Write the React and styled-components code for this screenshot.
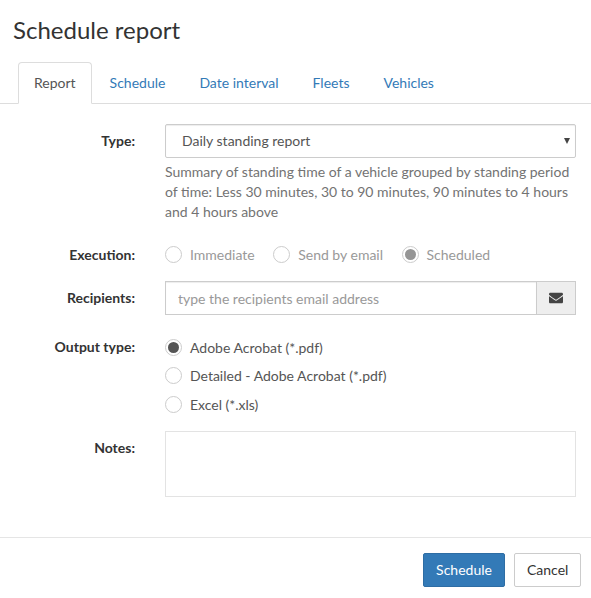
import React from "react";
import styled, { createGlobalStyle } from "styled-components";
import { FaEnvelope } from "react-icons/fa";

const GlobalStyle = createGlobalStyle`
	* { box-sizing: border-box; }
	body {
		margin: 0;
		background: #fff;
		font-family: Lato, "Open Sans", sans-serif;
		font-size: 14px;
		line-height: 20px;
		color: #333;
	}
`;

const Modal = styled.div`
	width: 591px;
	height: 598px;
	display: flex;
	flex-direction: column;
`;

const Title = styled.h4`
	margin: 0;
	padding: 13px 13px 0;
	height: 62px;
	font-size: 24px;
	line-height: 33px;
	font-weight: 400;
	color: #333;
`;

const Tabs = styled.ul`
	display: flex;
	margin: 0;
	padding: 0 0 0 18px;
	height: 42px;
	list-style: none;
	border-bottom: 1px solid #ddd;
`;

const Tab = styled.li`
	height: 42px;
	margin-right: 2px;
	padding: 10px 15px;
	border: 1px solid ${({ $active }) => ($active ? "#ddd" : "transparent")};
	border-bottom-color: ${({ $active }) => ($active ? "#fff" : "transparent")};
	border-radius: 4px 4px 0 0;
	color: ${({ $active }) => ($active ? "#555" : "#337ab7")};
	background: ${({ $active }) => ($active ? "#fff" : "transparent")};
`;

const Form = styled.form`
	flex: 1;
	display: flex;
	flex-direction: column;
	padding: 20px 15px 0 0;
`;

const Row = styled.div`
	display: grid;
	grid-template-columns: 135px 411px;
	column-gap: 30px;
	margin-bottom: ${({ $gap }) => $gap ?? 16}px;
`;

const Label = styled.label`
	text-align: right;
	font-weight: 700;
	padding-top: ${({ $top }) => $top ?? 7}px;
	color: #333;
`;

const SelectWrap = styled.div`
	position: relative;
`;

const Select = styled.select`
	display: block;
	width: 100%;
	height: 34px;
	padding: 6px 16px;
	appearance: none;
	background: #fff;
	border: 1px solid #ccc;
	border-radius: 2px;
	font: inherit;
	color: #555;
	box-shadow: inset 0 1px 1px rgba(0, 0, 0, 0.075);
`;

const Caret = styled.span`
	position: absolute;
	right: 6px;
	top: 14px;
	width: 0;
	height: 0;
	border-left: 3.5px solid transparent;
	border-right: 3.5px solid transparent;
	border-top: 6px solid #444;
	pointer-events: none;
`;

const Help = styled.p`
	margin: 4px 0 0;
	color: #737373;
`;

const RadioInline = styled.div`
	display: flex;
	gap: 18.5px;
	padding-top: 7px;
`;

const RadioStack = styled.div`
	display: flex;
	flex-direction: column;
	gap: 8.5px;
	padding: 6.7px 0 0.3px;
`;

const RadioLabel = styled.span`
	display: flex;
	align-items: center;
	height: 20px;
	gap: 8px;
	color: ${({ $disabled }) => ($disabled ? "#999" : "#555")};
`;

const RadioCircle = styled.span`
	width: 17px;
	height: 17px;
	margin-top: -1px;
	border: 1px solid #ccc;
	border-radius: 50%;
	background: #fff;
	display: flex;
	align-items: center;
	justify-content: center;
	&::after {
		content: "";
		display: ${({ $checked }) => ($checked ? "block" : "none")};
		width: 11px;
		height: 11px;
		border-radius: 50%;
		background: ${({ $disabled }) => ($disabled ? "#959595" : "#555")};
	}
`;

const InputGroup = styled.div`
	display: flex;
`;

const Input = styled.input`
	flex: 1;
	min-width: 0;
	height: 34px;
	padding: 6px 12px;
	background: #fff;
	border: 1px solid #ccc;
	border-right: 0;
	font: inherit;
	color: #555;
	box-shadow: inset 0 1px 1px rgba(0, 0, 0, 0.075);
	&::placeholder {
		color: #999;
		opacity: 1;
	}
`;

const Addon = styled.span`
	width: 40px;
	height: 34px;
	display: flex;
	align-items: center;
	justify-content: center;
	background: #eee;
	border: 1px solid #ccc;
	color: #444;
`;

const Textarea = styled.textarea`
	display: block;
	width: 100%;
	height: 66px;
	padding: 6px 12px;
	background: #fff;
	border: 1px solid #e3e3e3;
	font: inherit;
	resize: none;
`;

const Footer = styled.div`
	display: flex;
	justify-content: flex-end;
	gap: 9px;
	height: 61px;
	padding: 15px 10px 0 0;
	border-top: 1px solid #e5e5e5;
`;

const Button = styled.button`
	height: 34px;
	padding: 6px 12px;
	width: ${({ $width }) => $width}px;
	font: inherit;
	border-radius: 2px;
	border: 1px solid ${({ $primary }) => ($primary ? "#2e6da4" : "#ccc")};
	background: ${({ $primary }) => ($primary ? "#337ab7" : "#fff")};
	color: ${({ $primary }) => ($primary ? "#fff" : "#333")};
`;

const Radio = ({ label, checked, disabled }) => (
	<RadioLabel $disabled={disabled}>
		<RadioCircle $checked={checked} $disabled={disabled} />
		{label}
	</RadioLabel>
);

const App = () => {
	return (
		<Modal>
			<GlobalStyle />
			<Title>Schedule report</Title>
			<Tabs>
				<Tab $active>Report</Tab>
				<Tab>Schedule</Tab>
				<Tab>Date interval</Tab>
				<Tab>Fleets</Tab>
				<Tab>Vehicles</Tab>
			</Tabs>
			<Form>
				<Row>
					<Label>Type:</Label>
					<div>
						<SelectWrap>
							<Select defaultValue="daily">
								<option value="daily">Daily standing report</option>
							</Select>
							<Caret />
						</SelectWrap>
						<Help>
							Summary of standing time of a vehicle grouped by standing period
							of time: Less 30 minutes, 30 to 90 minutes, 90 minutes to 4 hours
							and 4 hours above
						</Help>
					</div>
				</Row>
				<Row>
					<Label>Execution:</Label>
					<RadioInline>
						<Radio label="Immediate" disabled />
						<Radio label="Send by email" disabled />
						<Radio label="Scheduled" checked disabled />
					</RadioInline>
				</Row>
				<Row>
					<Label>Recipients:</Label>
					<InputGroup>
						<Input placeholder="type the recipients email address" />
						<Addon>
							<FaEnvelope size={14} />
						</Addon>
					</InputGroup>
				</Row>
				<Row>
					<Label $top={6}>Output type:</Label>
					<RadioStack>
						<Radio label="Adobe Acrobat (*.pdf)" checked />
						<Radio label="Detailed - Adobe Acrobat (*.pdf)" />
						<Radio label="Excel (*.xls)" />
					</RadioStack>
				</Row>
				<Row $gap={0}>
					<Label>Notes:</Label>
					<Textarea />
				</Row>
			</Form>
			<Footer>
				<Button $primary $width={82}>Schedule</Button>
				<Button $width={67}>Cancel</Button>
			</Footer>
		</Modal>
	);
};

export default App;
